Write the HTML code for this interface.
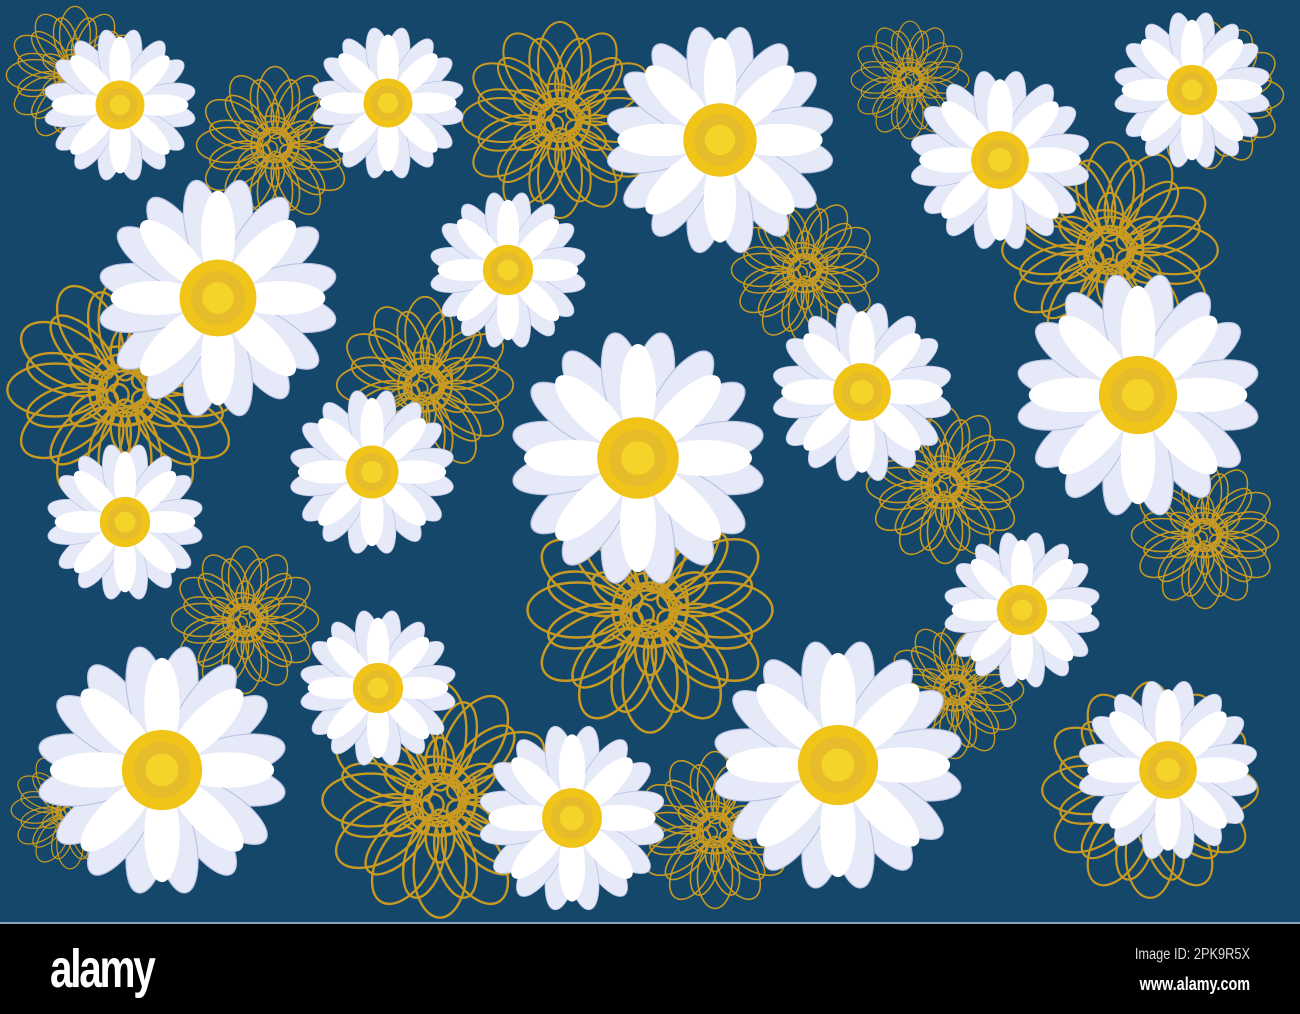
<!DOCTYPE html>
<html><head><meta charset="utf-8"><style>
html,body{margin:0;padding:0;background:#000}
body{width:1300px;height:1014px;overflow:hidden;position:relative;font-family:"Liberation Sans",sans-serif}
#art{position:absolute;left:0;top:0}
.bar{position:absolute;left:0;top:924px;width:1300px;height:90px;background:#000}
.logo{position:absolute;left:50px;top:14px;color:#fff;font-size:54px;font-weight:bold;letter-spacing:-3px;transform:scaleX(0.75);transform-origin:left}
.id{position:absolute;right:50px;top:22px;color:#ddd;font-size:16px;transform:scaleX(0.8);transform-origin:right}
.www{position:absolute;right:50px;top:50px;color:#fff;font-size:18px;font-weight:bold;transform:scaleX(0.8);transform-origin:right}
</style></head><body>
<svg id="art" width="1300" height="924" viewBox="0 0 1300 924">
<defs>
<g id="g1">
<g fill="none" stroke="#c99a22" stroke-width="2">
<ellipse cx="0" cy="-58" rx="22" ry="40"/>
<ellipse cx="0" cy="-58" rx="22" ry="40" transform="rotate(30)"/>
<ellipse cx="0" cy="-58" rx="22" ry="40" transform="rotate(60)"/>
<ellipse cx="0" cy="-58" rx="22" ry="40" transform="rotate(90)"/>
<ellipse cx="0" cy="-58" rx="22" ry="40" transform="rotate(120)"/>
<ellipse cx="0" cy="-58" rx="22" ry="40" transform="rotate(150)"/>
<ellipse cx="0" cy="-58" rx="22" ry="40" transform="rotate(180)"/>
<ellipse cx="0" cy="-58" rx="22" ry="40" transform="rotate(210)"/>
<ellipse cx="0" cy="-58" rx="22" ry="40" transform="rotate(240)"/>
<ellipse cx="0" cy="-58" rx="22" ry="40" transform="rotate(270)"/>
<ellipse cx="0" cy="-58" rx="22" ry="40" transform="rotate(300)"/>
<ellipse cx="0" cy="-58" rx="22" ry="40" transform="rotate(330)"/>
<ellipse cx="0" cy="-50" rx="16" ry="34" transform="rotate(15)"/>
<ellipse cx="0" cy="-50" rx="16" ry="34" transform="rotate(45)"/>
<ellipse cx="0" cy="-50" rx="16" ry="34" transform="rotate(75)"/>
<ellipse cx="0" cy="-50" rx="16" ry="34" transform="rotate(105)"/>
<ellipse cx="0" cy="-50" rx="16" ry="34" transform="rotate(135)"/>
<ellipse cx="0" cy="-50" rx="16" ry="34" transform="rotate(165)"/>
<ellipse cx="0" cy="-50" rx="16" ry="34" transform="rotate(195)"/>
<ellipse cx="0" cy="-50" rx="16" ry="34" transform="rotate(225)"/>
<ellipse cx="0" cy="-50" rx="16" ry="34" transform="rotate(255)"/>
<ellipse cx="0" cy="-50" rx="16" ry="34" transform="rotate(285)"/>
<ellipse cx="0" cy="-50" rx="16" ry="34" transform="rotate(315)"/>
<ellipse cx="0" cy="-50" rx="16" ry="34" transform="rotate(345)"/>
<ellipse cx="0" cy="-30" rx="12" ry="22" transform="rotate(0)"/>
<ellipse cx="0" cy="-30" rx="12" ry="22" transform="rotate(60)"/>
<ellipse cx="0" cy="-30" rx="12" ry="22" transform="rotate(120)"/>
<ellipse cx="0" cy="-30" rx="12" ry="22" transform="rotate(180)"/>
<ellipse cx="0" cy="-30" rx="12" ry="22" transform="rotate(240)"/>
<ellipse cx="0" cy="-30" rx="12" ry="22" transform="rotate(300)"/>
<circle r="30"/><circle r="22"/><circle r="14" cx="5"/><circle r="9" cx="-6" cy="4"/>
<path d="M-25 -10 Q0 -30 25 -5 Q10 20 -20 15 Q-30 0 -10 -15 Q15 -20 18 10 M-30 20 Q-10 35 20 25 Q35 5 28 -20 M-15 -35 Q5 -40 20 -25"/>
</g></g>
<g id="d1">
<g fill="#e6e9f8" stroke="#bcc4e4" stroke-width="1">
<ellipse cx="0" cy="-62" rx="17" ry="44" transform="rotate(11)"/>
<ellipse cx="0" cy="-62" rx="17" ry="44" transform="rotate(34)"/>
<ellipse cx="0" cy="-62" rx="17" ry="44" transform="rotate(56)"/>
<ellipse cx="0" cy="-62" rx="17" ry="44" transform="rotate(79)"/>
<ellipse cx="0" cy="-62" rx="17" ry="44" transform="rotate(101)"/>
<ellipse cx="0" cy="-62" rx="17" ry="44" transform="rotate(124)"/>
<ellipse cx="0" cy="-62" rx="17" ry="44" transform="rotate(146)"/>
<ellipse cx="0" cy="-62" rx="17" ry="44" transform="rotate(169)"/>
<ellipse cx="0" cy="-62" rx="17" ry="44" transform="rotate(191)"/>
<ellipse cx="0" cy="-62" rx="17" ry="44" transform="rotate(214)"/>
<ellipse cx="0" cy="-62" rx="17" ry="44" transform="rotate(236)"/>
<ellipse cx="0" cy="-62" rx="17" ry="44" transform="rotate(259)"/>
<ellipse cx="0" cy="-62" rx="17" ry="44" transform="rotate(281)"/>
<ellipse cx="0" cy="-62" rx="17" ry="44" transform="rotate(304)"/>
<ellipse cx="0" cy="-62" rx="17" ry="44" transform="rotate(326)"/>
<ellipse cx="0" cy="-62" rx="17" ry="44" transform="rotate(349)"/>
</g>
<g fill="#ffffff">
<ellipse cx="0" cy="-55" rx="15" ry="40"/>
<ellipse cx="0" cy="-55" rx="15" ry="40" transform="rotate(45)"/>
<ellipse cx="0" cy="-55" rx="15" ry="40" transform="rotate(90)"/>
<ellipse cx="0" cy="-55" rx="15" ry="40" transform="rotate(135)"/>
<ellipse cx="0" cy="-55" rx="15" ry="40" transform="rotate(180)"/>
<ellipse cx="0" cy="-55" rx="15" ry="40" transform="rotate(225)"/>
<ellipse cx="0" cy="-55" rx="15" ry="40" transform="rotate(270)"/>
<ellipse cx="0" cy="-55" rx="15" ry="40" transform="rotate(315)"/>
</g>
<circle r="34" fill="#f0c419"/>
<circle r="24" fill="#e6bc2a"/>
<circle r="14" fill="#f5d42a"/>
</g>
</defs>
<rect width="1300" height="924" fill="#14476a"/>
<rect y="922" width="1300" height="2" fill="#8aa2b8"/>
<g>
<use href="#g1" transform="translate(75,75) scale(0.7)"/>
<use href="#g1" transform="translate(275,145) scale(0.8)"/>
<use href="#g1" transform="translate(560,120) scale(1.0)"/>
<use href="#g1" transform="translate(910,80) scale(0.6)"/>
<use href="#g1" transform="translate(1210,95) scale(0.75)"/>
<use href="#g1" transform="translate(805,270) scale(0.75)"/>
<use href="#g1" transform="translate(1110,250) scale(1.1)"/>
<use href="#g1" transform="translate(125,390) scale(1.2)"/>
<use href="#g1" transform="translate(425,385) scale(0.9)"/>
<use href="#g1" transform="translate(945,485) scale(0.8)"/>
<use href="#g1" transform="translate(1205,535) scale(0.75)"/>
<use href="#g1" transform="translate(650,610) scale(1.25)"/>
<use href="#g1" transform="translate(245,620) scale(0.75)"/>
<use href="#g1" transform="translate(440,800) scale(1.2)"/>
<use href="#g1" transform="translate(715,830) scale(0.8)"/>
<use href="#g1" transform="translate(955,690) scale(0.7)"/>
<use href="#g1" transform="translate(1150,790) scale(1.1)"/>
<use href="#g1" transform="translate(70,810) scale(0.6)"/>
</g>
<g>
<use href="#d1" transform="translate(120,105) scale(0.72)"/>
<use href="#d1" transform="translate(388,103) scale(0.72)"/>
<use href="#d1" transform="translate(720,140) scale(1.08)"/>
<use href="#d1" transform="translate(1000,160) scale(0.85)"/>
<use href="#d1" transform="translate(1192,90) scale(0.74)"/>
<use href="#d1" transform="translate(218,298) scale(1.13)"/>
<use href="#d1" transform="translate(508,270) scale(0.74)"/>
<use href="#d1" transform="translate(862,392) scale(0.85)"/>
<use href="#d1" transform="translate(1138,395) scale(1.15)"/>
<use href="#d1" transform="translate(638,458) scale(1.2)"/>
<use href="#d1" transform="translate(372,472) scale(0.78)"/>
<use href="#d1" transform="translate(125,522) scale(0.74)"/>
<use href="#d1" transform="translate(1022,610) scale(0.74)"/>
<use href="#d1" transform="translate(378,688) scale(0.74)"/>
<use href="#d1" transform="translate(162,770) scale(1.18)"/>
<use href="#d1" transform="translate(572,818) scale(0.88)"/>
<use href="#d1" transform="translate(838,765) scale(1.18)"/>
<use href="#d1" transform="translate(1168,770) scale(0.85)"/>
</g>
</svg>
<div class="bar">
<div class="logo">alamy</div>
<div class="id">Image ID: 2PK9R5X</div>
<div class="www">www.alamy.com</div>
</div>
</body></html>
